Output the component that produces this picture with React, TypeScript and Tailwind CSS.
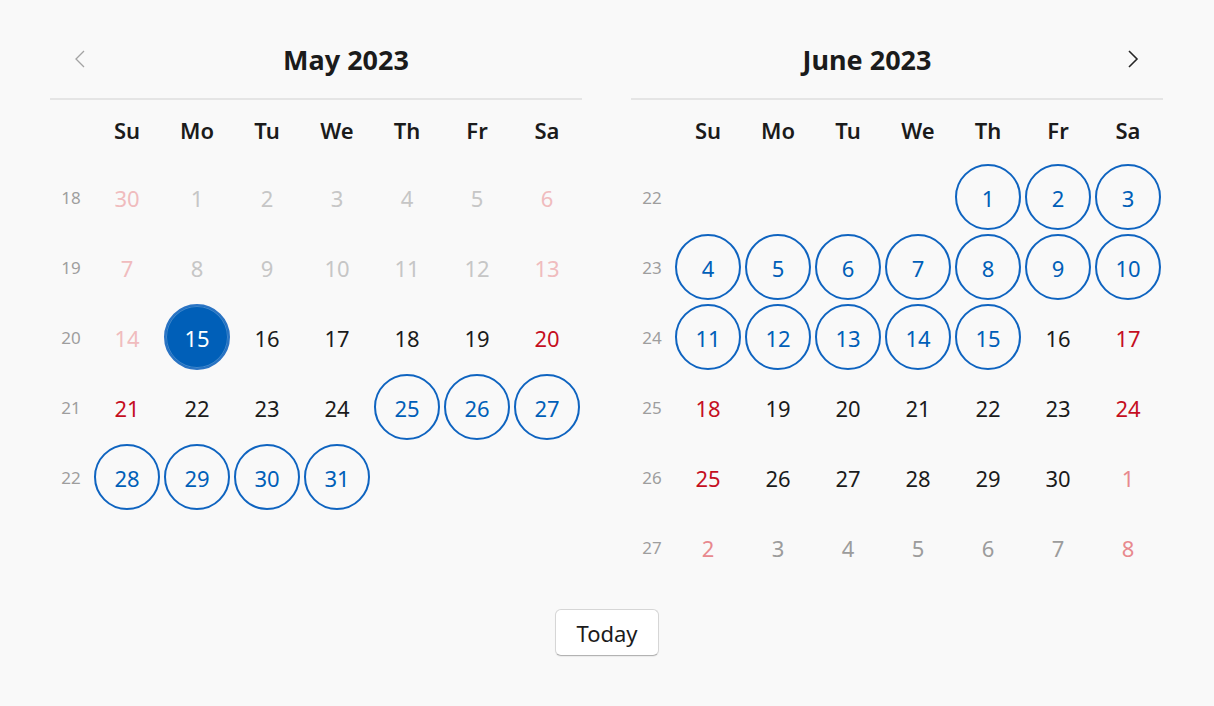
type Kind = "normal" | "weekend" | "dim" | "dimWeekend" | "out" | "outWeekend" | "range" | "selected" | "empty";

interface Day {
  n?: number;
  k: Kind;
}

interface Week {
  wk: number;
  days: Day[];
}

const dayNames = ["Su", "Mo", "Tu", "We", "Th", "Fr", "Sa"];

const mayWeeks: Week[] = [
  {
    wk: 18,
    days: [
      { n: 30, k: "dimWeekend" },
      { n: 1, k: "dim" },
      { n: 2, k: "dim" },
      { n: 3, k: "dim" },
      { n: 4, k: "dim" },
      { n: 5, k: "dim" },
      { n: 6, k: "dimWeekend" },
    ],
  },
  {
    wk: 19,
    days: [
      { n: 7, k: "dimWeekend" },
      { n: 8, k: "dim" },
      { n: 9, k: "dim" },
      { n: 10, k: "dim" },
      { n: 11, k: "dim" },
      { n: 12, k: "dim" },
      { n: 13, k: "dimWeekend" },
    ],
  },
  {
    wk: 20,
    days: [
      { n: 14, k: "dimWeekend" },
      { n: 15, k: "selected" },
      { n: 16, k: "normal" },
      { n: 17, k: "normal" },
      { n: 18, k: "normal" },
      { n: 19, k: "normal" },
      { n: 20, k: "weekend" },
    ],
  },
  {
    wk: 21,
    days: [
      { n: 21, k: "weekend" },
      { n: 22, k: "normal" },
      { n: 23, k: "normal" },
      { n: 24, k: "normal" },
      { n: 25, k: "range" },
      { n: 26, k: "range" },
      { n: 27, k: "range" },
    ],
  },
  {
    wk: 22,
    days: [
      { n: 28, k: "range" },
      { n: 29, k: "range" },
      { n: 30, k: "range" },
      { n: 31, k: "range" },
      { k: "empty" },
      { k: "empty" },
      { k: "empty" },
    ],
  },
];

function run(from: number, to: number, k: Kind): Day[] {
  const out: Day[] = [];
  for (let i = from; i <= to; i++) out.push({ n: i, k });
  return out;
}

const juneWeeks: Week[] = [
  {
    wk: 22,
    days: [{ k: "empty" }, { k: "empty" }, { k: "empty" }, { k: "empty" }, ...run(1, 3, "range")],
  },
  { wk: 23, days: run(4, 10, "range") },
  {
    wk: 24,
    days: [...run(11, 15, "range"), { n: 16, k: "normal" }, { n: 17, k: "weekend" }],
  },
  {
    wk: 25,
    days: [{ n: 18, k: "weekend" }, ...run(19, 23, "normal"), { n: 24, k: "weekend" }],
  },
  {
    wk: 26,
    days: [{ n: 25, k: "weekend" }, ...run(26, 30, "normal"), { n: 1, k: "outWeekend" }],
  },
  {
    wk: 27,
    days: [{ n: 2, k: "outWeekend" }, ...run(3, 7, "out"), { n: 8, k: "outWeekend" }],
  },
];

const textColor: Record<Kind, string> = {
  normal: "text-[#1b1b1b]",
  weekend: "text-[#c50f1f]",
  dim: "text-[#c6c6c6]",
  dimWeekend: "text-[#f0bcbe]",
  out: "text-[#9c9c9c]",
  outWeekend: "text-[#e8898e]",
  range: "text-[#005fb8]",
  selected: "text-white",
  empty: "",
};

function DayCell({ day }: { day: Day }) {
  if (day.k === "empty") return <div className="h-[70px]" />;
  let circle = "";
  if (day.k === "range") circle = "border-2 border-[#0f64c0]";
  if (day.k === "selected")
    circle = "bg-[#005fb8] border-2 border-[#2b74c4] shadow-[inset_0_0_0_1px_rgba(255,255,255,0.25)]";
  return (
    <div className="h-[70px] flex items-center justify-center">
      <div
        className={`w-[66px] h-[66px] rounded-full flex items-center justify-center pt-[3px] text-[22px] ${circle} ${textColor[day.k]}`}
      >
        {day.n}
      </div>
    </div>
  );
}

function Chevron({ dir }: { dir: "left" | "right" }) {
  return dir === "left" ? (
    <svg width="14" height="20" viewBox="0 0 14 20" fill="none">
      <polyline points="11,2 3,10 11,18" stroke="#a3a3a3" strokeWidth="1.3" />
    </svg>
  ) : (
    <svg width="14" height="20" viewBox="0 0 14 20" fill="none">
      <polyline points="3,2 11,10 3,18" stroke="#262626" strokeWidth="1.6" />
    </svg>
  );
}

function Month({ title, weeks, nav }: { title: string; weeks: Week[]; nav: "left" | "right" }) {
  const button = (
    <div className="w-[60px] h-full flex items-center justify-center">
      <Chevron dir={nav} />
    </div>
  );
  return (
    <div className="w-[532px]">
      <div className="h-[78px] flex items-center">
        {nav === "left" && button}
        <div className="flex-1 text-center pt-[2px] text-[27px] font-bold text-[#1b1b1b]">{title}</div>
        {nav === "right" && button}
      </div>
      <div className="h-[2px] bg-[#e5e5e5]" />
      <div className="grid grid-cols-[42px_repeat(7,70px)]">
        <div className="h-[62px]" />
        {dayNames.map((d) => (
          <div key={d} className="h-[62px] flex items-center justify-center pb-[1px] text-[22px] font-semibold text-[#1b1b1b]">
            {d}
          </div>
        ))}
        {weeks.map((w) => (
          <div key={w.wk} className="contents">
            <div className="h-[70px] flex items-center justify-center pt-[2px] text-[17px] text-[#9e9e9e]">{w.wk}</div>
            {w.days.map((d, i) => (
              <DayCell key={i} day={d} />
            ))}
          </div>
        ))}
      </div>
    </div>
  );
}

export default function App() {
  return (
    <div className="min-h-screen bg-[#f9f9f9] pt-[20px] font-['Noto_Sans','Open_Sans',sans-serif]">
      <div className="flex gap-[49px] pl-[50px] items-start">
        <Month title="May 2023" weeks={mayWeeks} nav="left" />
        <Month title="June 2023" weeks={juneWeeks} nav="right" />
      </div>
      <div className="flex justify-center mt-[27px]">
        <button className="w-[104px] h-[47px] rounded-[6px] bg-white border border-[#d6d6d6] border-b-[#b3b3b3] shadow-[0_1px_1px_rgba(0,0,0,0.06)] pt-[1px] text-[22px] text-[#1b1b1b]">
          Today
        </button>
      </div>
    </div>
  );
}
